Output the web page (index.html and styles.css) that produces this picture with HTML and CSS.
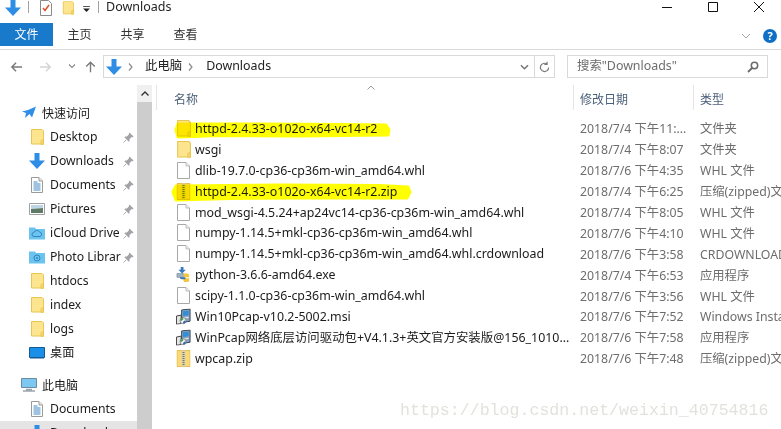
FILE: index.html
```html
<!DOCTYPE html>
<html lang="zh">
<head>
<meta charset="utf-8">
<title>Downloads</title>
<link rel="stylesheet" href="styles.css">
</head>
<body>
<svg class="defs" width="0" height="0" aria-hidden="true">
  <defs>
    <symbol id="i-folder" viewBox="0 0 14 16">
      <path d="M1.5.5h10.500l1.500 1.500v13h-12z" fill="#fde58f" stroke="#e8c64f"/>
      <path d="M11 15.500v-4l2.500-1v5z" fill="#f6d36a" stroke="#e8c64f" stroke-width=".7"/>
    </symbol>
    <symbol id="i-down" viewBox="0 0 16 16">
      <path d="M5.500 0h5v7.500H16L8 16 0 7.500h5.500z" fill="#2e8de4"/>
    </symbol>
    <symbol id="i-doc" viewBox="0 0 12 16">
      <path d="M.5.500h7.500l3.500 3.500v11.500H.5z" fill="#fff" stroke="#9a9a9a"/>
      <path d="M8 .5v3.500h3.500" fill="#e8e8e8" stroke="#9a9a9a"/>
      <path d="M2.500 5h4M2.500 7h7M2.500 9h7M2.500 11h7M2.500 13h7" stroke="#3d86c6"/>
    </symbol>
    <symbol id="i-file" viewBox="0 0 13 17">
      <path d="M.5.5h8.500l3.500 3.500v12.500H.5z" fill="#fff" stroke="#a8a8a8"/>
      <path d="M9 .5v3.500h3.500" fill="#f0f0f0" stroke="#bdbdbd"/>
    </symbol>
    <symbol id="i-zip" viewBox="0 0 14 17">
      <path d="M.5.500h13v16H.500z" fill="#fbd976" stroke="#e5bf52"/>
      <path d="M5 .5h4v16H5z" fill="#d9d2b4"/>
      <path d="M6 2.500h2M6 4.500h2M6 6.500h2M6 8.500h2M6 10.500h2M6 12.500h2M6 14.500h2" stroke="#77775e"/>
    </symbol>
    <symbol id="i-pin" viewBox="0 0 12 12">
      <path d="M7 .5l4.500 4.500-1 .7-1-.3L7 7.800l.2 1.900-.9.800L1.500 5.700l.8-.9 1.900.2 2.400-2.500-.3-1z" fill="#a0a4a8"/>
      <path d="M3.500 8.500L.5 11.500" stroke="#a0a4a8"/>
    </symbol>
    <symbol id="i-msi" viewBox="0 0 16 17">
      <path d="M6 1.500L15 .5v13l-9 1.500z" fill="#8aa2bb" stroke="#2f3f52"/>
      <path d="M7.500 3l6-.8v5l-6 .8z" fill="#2f8fd8"/>
      <path d="M7.500 9.500l6-.8v1.500l-6 .8z" fill="#dfe6ee"/>
      <path d="M.5 8l5-1v9l-5 .8z" fill="#e6e6e6" stroke="#3a3a3a"/>
      <circle cx="7.500" cy="13" r="3.300" fill="#e8e8e8" stroke="#555" stroke-width=".6"/>
      <path d="M4.500 13a3 3 0 0 1 3-3v3z" fill="#3a9a4a"/>
      <path d="M7.500 13h3a3 3 0 0 1-3 3z" fill="#2f68b8"/>
      <circle cx="7.500" cy="13" r="1" fill="#fff"/>
    </symbol>
  </defs>
</svg>

<div class="app">
  <header class="titlebar">
    <div class="qat">
      <svg class="ic16" viewBox="0 0 16 16"><use href="#i-down"/></svg>
      <span class="vsep"></span>
      <svg class="ic-check" viewBox="0 0 12 16">
        <path d="M.5.500h8l3 3v12h-11z" fill="#fff" stroke="#8a8a8a"/>
        <path d="M3 8l2 2.500L9 5" fill="none" stroke="#d9532c" stroke-width="1.500"/>
      </svg>
      <svg class="ic-folder-t" viewBox="0 0 14 16"><use href="#i-folder"/></svg>
      <svg class="ic-drop" viewBox="0 0 8 7"><path d="M0 0h8v1H0zM0 3h8L4 7z" fill="#222"/></svg>
      <span class="vsep"></span>
      <span class="title-text">Downloads</span>
    </div>
    <div class="winctl">
      <svg class="wc" viewBox="0 0 12 12"><path d="M1 6.500h10" stroke="#111"/></svg>
      <svg class="wc" viewBox="0 0 12 12"><path d="M1.500 1.500h9v9h-9z" fill="none" stroke="#111"/></svg>
      <svg class="wc" viewBox="0 0 12 12"><path d="M1 1l10 10M11 1L1 11" stroke="#111"/></svg>
    </div>
  </header>

  <nav class="ribbon">
    <span class="tab tab-file">文件</span>
    <span class="tab">主页</span>
    <span class="tab">共享</span>
    <span class="tab">查看</span>
    <svg class="rb-chev" viewBox="0 0 10 6"><path d="M1 1l4 4 4-4" fill="none" stroke="#a8a8a8"/></svg>
    <span class="help">?</span>
  </nav>

  <div class="addressrow">
    <div class="navbtns">
      <svg class="nav-ic" viewBox="0 0 14 12"><path d="M13 6H2M6.500 1.500L2 6l4.500 4.500" fill="none" stroke="#7a7a7a" stroke-width="1.600"/></svg>
      <svg class="nav-ic" viewBox="0 0 14 12"><path d="M1 6h11M7.500 1.500L12 6l-4.500 4.500" fill="none" stroke="#d4d4d4" stroke-width="1.600"/></svg>
      <svg class="nav-drop" viewBox="0 0 8 5"><path d="M1 .5l3 3 3-3" fill="none" stroke="#8a8a8a" stroke-width="1.200"/></svg>
      <svg class="nav-ic" viewBox="0 0 14 14"><path d="M7 13V2M2 6.500L7 1.500l5 5" fill="none" stroke="#7a7a7a" stroke-width="1.600"/></svg>
    </div>
    <div class="addr">
      <svg class="ic16" viewBox="0 0 16 16"><use href="#i-down"/></svg>
      <svg class="crumb" viewBox="0 0 5 8"><path d="M1 .5L4 4 1 7.500" fill="none" stroke="#8a8a8a" stroke-width="1.200"/></svg>
      <span class="crumb-t">此电脑</span>
      <svg class="crumb" viewBox="0 0 5 8"><path d="M1 .5L4 4 1 7.500" fill="none" stroke="#8a8a8a" stroke-width="1.200"/></svg>
      <span class="crumb-t">Downloads</span>
      <span class="spacer"></span>
      <svg class="addr-drop" viewBox="0 0 10 6"><path d="M1 1l4 4 4-4" fill="none" stroke="#707070" stroke-width="1.400"/></svg>
      <span class="addr-sep"></span>
      <svg class="addr-refresh" viewBox="0 0 12 13"><path d="M8.500 3.200A4.500 4.500 0 1 0 10.500 7M8.800.8v3h-3" fill="none" stroke="#7a7a7a" stroke-width="1.300"/></svg>
    </div>
    <div class="search">
      <span class="search-t">搜索"Downloads"</span>
      <svg class="search-ic" viewBox="0 0 12 12"><circle cx="7.500" cy="4.500" r="3.200" fill="none" stroke="#6a6a6a" stroke-width="1.500"/><path d="M5 7l-4 4" stroke="#6a6a6a" stroke-width="1.800"/></svg>
    </div>
  </div>

  <main class="main">
    <aside class="side">
      <ul class="tree">
        <li class="node node-top">
          <svg class="nic" viewBox="0 0 16 14"><path d="M15 .5l-4 11-2.500-3.500L4 12l1-5-4-1.500 6-1.500z" fill="#2f8fe6"/></svg>
          <span class="nlabel">快速访问</span>
        </li>
        <li class="node"><svg class="fic" viewBox="0 0 14 16"><use href="#i-folder"/></svg><span class="nlabel">Desktop</span><svg class="pin" viewBox="0 0 12 12"><use href="#i-pin"/></svg></li>
        <li class="node"><svg class="fic" viewBox="0 0 16 16"><use href="#i-down"/></svg><span class="nlabel">Downloads</span><svg class="pin" viewBox="0 0 12 12"><use href="#i-pin"/></svg></li>
        <li class="node"><svg class="fic" viewBox="0 0 12 16"><use href="#i-doc"/></svg><span class="nlabel">Documents</span><svg class="pin" viewBox="0 0 12 12"><use href="#i-pin"/></svg></li>
        <li class="node">
          <svg class="fic" viewBox="0 0 16 12"><path d="M.5.500h15v11H.500z" fill="#fff" stroke="#a0a0a0"/><path d="M2 2h12v3l-12 1z" fill="#bcd6e8"/><path d="M2 6l12-1v5H2z" fill="#5f7a66"/></svg>
          <span class="nlabel">Pictures</span><svg class="pin" viewBox="0 0 12 12"><use href="#i-pin"/></svg>
        </li>
        <li class="node">
          <svg class="fic" viewBox="0 0 16 13"><path d="M0 2.500V1h6l1 1.500h9V13H0z" fill="#6cc3ef"/><path d="M5 10a2 2 0 0 1 0-4 3 3 0 0 1 5.500-.5A2.300 2.300 0 0 1 11 10z" fill="none" stroke="#2f86c0"/></svg>
          <span class="nlabel">iCloud Drive</span><svg class="pin" viewBox="0 0 12 12"><use href="#i-pin"/></svg>
        </li>
        <li class="node">
          <svg class="fic" viewBox="0 0 16 13"><path d="M0 2.500V1h6l1 1.500h9V13H0z" fill="#6cc3ef"/><circle cx="8" cy="7.500" r="3" fill="none" stroke="#2f86c0"/><circle cx="8" cy="7.500" r="1" fill="#2f86c0"/></svg>
          <span class="nlabel">Photo Library</span><svg class="pin" viewBox="0 0 12 12"><use href="#i-pin"/></svg>
        </li>
        <li class="node"><svg class="fic" viewBox="0 0 14 16"><use href="#i-folder"/></svg><span class="nlabel">htdocs</span></li>
        <li class="node"><svg class="fic" viewBox="0 0 14 16"><use href="#i-folder"/></svg><span class="nlabel">index</span></li>
        <li class="node"><svg class="fic" viewBox="0 0 14 16"><use href="#i-folder"/></svg><span class="nlabel">logs</span></li>
        <li class="node">
          <svg class="fic" viewBox="0 0 16 12"><path d="M.5.500h15v10H.500z" fill="#1a8fe8" stroke="#155a96"/><path d="M1 10.500h14v1H1z" fill="#155a96"/></svg>
          <span class="nlabel">桌面</span>
        </li>
        <li class="node node-top node-gap">
          <svg class="nic-pc" viewBox="0 0 16 14"><path d="M.5.500h15v9H.500z" fill="#7cc8f0" stroke="#6b8ba0"/><path d="M5 11.500h6M2 13h12" stroke="#9aa6b0" stroke-width="1.500"/></svg>
          <span class="nlabel">此电脑</span>
        </li>
        <li class="node"><svg class="fic" viewBox="0 0 12 16"><use href="#i-doc"/></svg><span class="nlabel">Documents</span></li>
        <li class="node node-sel"><svg class="fic" viewBox="0 0 16 16"><use href="#i-down"/></svg><span class="nlabel">Downloads</span></li>
      </ul>
    </aside>

    <div class="scroll">
      <div class="scroll-up"><svg class="scroll-arrow" viewBox="0 0 8 5"><path d="M.5 4.500L4 1l3.500 3.500" fill="none" stroke="#333" stroke-width="1.400"/></svg></div>
      <div class="scroll-thumb"></div>
    </div>

    <section class="list">
      <div class="list-head">
        <div class="hcell hcell-name">名称<svg class="sort" viewBox="0 0 8 5"><path d="M.5 4.500L4 1l3.500 3.500" fill="none" stroke="#9a9a9a"/></svg></div>
        <div class="hcell">修改日期</div>
        <div class="hcell">类型</div>
      </div>
      <div class="rows">
        <div class="row"><svg class="ric" viewBox="0 0 14 16"><use href="#i-folder"/></svg><span class="rname">httpd-2.4.33-o102o-x64-vc14-r2</span><span class="rmeta">2018/7/4 下午11:...</span><span class="rmeta">文件夹</span></div>
        <div class="row"><svg class="ric" viewBox="0 0 14 16"><use href="#i-folder"/></svg><span class="rname">wsgi</span><span class="rmeta">2018/7/4 下午8:07</span><span class="rmeta">文件夹</span></div>
        <div class="row"><svg class="ric" viewBox="0 0 13 17"><use href="#i-file"/></svg><span class="rname">dlib-19.7.0-cp36-cp36m-win_amd64.whl</span><span class="rmeta">2018/7/6 下午4:35</span><span class="rmeta">WHL 文件</span></div>
        <div class="row"><svg class="ric" viewBox="0 0 14 17"><use href="#i-zip"/></svg><span class="rname">httpd-2.4.33-o102o-x64-vc14-r2.zip</span><span class="rmeta">2018/7/4 下午6:25</span><span class="rmeta">压缩(zipped)文件夹</span></div>
        <div class="row"><svg class="ric" viewBox="0 0 13 17"><use href="#i-file"/></svg><span class="rname">mod_wsgi-4.5.24+ap24vc14-cp36-cp36m-win_amd64.whl</span><span class="rmeta">2018/7/4 下午8:05</span><span class="rmeta">WHL 文件</span></div>
        <div class="row"><svg class="ric" viewBox="0 0 13 17"><use href="#i-file"/></svg><span class="rname">numpy-1.14.5+mkl-cp36-cp36m-win_amd64.whl</span><span class="rmeta">2018/7/6 下午4:10</span><span class="rmeta">WHL 文件</span></div>
        <div class="row"><svg class="ric" viewBox="0 0 13 17"><use href="#i-file"/></svg><span class="rname">numpy-1.14.5+mkl-cp36-cp36m-win_amd64.whl.crdownload</span><span class="rmeta">2018/7/6 下午3:58</span><span class="rmeta">CRDOWNLOAD 文件</span></div>
        <div class="row">
          <svg class="ric" viewBox="0 0 16 16"><path d="M1 7h7v4H1z" fill="#9fb4c8" stroke="#6d7f90" stroke-width=".6"/><path d="M5 0h3v3h2.500L6.500 7 2.500 3H5z" fill="#3d7ac0"/><path d="M8 7h4a2 2 0 0 1 2 2v2H9v1h5v2a2 2 0 0 1-2 2H9a2 2 0 0 1-1-2z" fill="#f2c53d"/><path d="M4 11h6v2H6a2 2 0 0 1-2-2z" fill="#3b76b0"/></svg>
          <span class="rname">python-3.6.6-amd64.exe</span><span class="rmeta">2018/7/4 下午6:53</span><span class="rmeta">应用程序</span>
        </div>
        <div class="row"><svg class="ric" viewBox="0 0 13 17"><use href="#i-file"/></svg><span class="rname">scipy-1.1.0-cp36-cp36m-win_amd64.whl</span><span class="rmeta">2018/7/6 下午3:56</span><span class="rmeta">WHL 文件</span></div>
        <div class="row"><svg class="ric" viewBox="0 0 16 17"><use href="#i-msi"/></svg><span class="rname">Win10Pcap-v10.2-5002.msi</span><span class="rmeta">2018/7/6 下午7:52</span><span class="rmeta">Windows Installer</span></div>
        <div class="row"><svg class="ric" viewBox="0 0 16 17"><use href="#i-msi"/></svg><span class="rname">WinPcap网络底层访问驱动包+V4.1.3+英文官方安装版@156_1010...</span><span class="rmeta">2018/7/6 下午7:58</span><span class="rmeta">应用程序</span></div>
        <div class="row"><svg class="ric" viewBox="0 0 14 17"><use href="#i-zip"/></svg><span class="rname">wpcap.zip</span><span class="rmeta">2018/7/6 下午7:48</span><span class="rmeta">压缩(zipped)文件夹</span></div>
      </div>
    </section>
  </main>

  <svg class="marker" viewBox="0 0 781 429" aria-hidden="true">
    <path class="marker-a" d="M178 124L260 124 340 124.500 386 125 389 130 388 135 300 136 220 135.500 178 137 176 130z"/>
    <path class="marker-b" d="M176 186L280 185 380 185.500 408 187 410 192 407 198 300 198 230 198.500 176 200 173 192z"/>
  </svg>
  <div class="watermark">https://blog.csdn.net/weixin_40754816</div>
</div>
</body>
</html>
```

FILE: styles.css
```css
* { box-sizing: border-box; }
html, body { margin: 0; padding: 0; background: #fff; }
body { width: 781px; height: 429px; overflow: hidden; font-family: "Noto Sans", "Noto Sans CJK SC", sans-serif; font-size: 12px; color: #1b1b1b; }
.defs { position: absolute; }
svg { display: block; flex: none; }
ul { list-style: none; margin: 0; padding: 0; }

.app { position: relative; width: 781px; height: 429px; overflow: hidden; display: flex; flex-direction: column; }

.titlebar { height: 23px; display: flex; justify-content: space-between; }
.qat { display: flex; align-items: flex-start; padding-left: 5px; }
.ic16 { width: 16px; height: 16px; }
.vsep { width: 1px; height: 12px; background: #a0a0a0; margin: 1px 11px 0 7px; }
.ic-check { width: 12px; height: 16px; margin: 0 10px 0 0; }
.ic-folder-t { width: 12px; height: 16px; margin-right: 9px; }
.ic-drop { width: 7px; height: 6px; margin: 6px 1px 0 0; }
.title-text { margin-top: -1px; line-height: 16px; margin-left: -4px; font-size: 12.500px; color: #222; }
.winctl { display: flex; gap: 34px; padding: 1px 16px 0 0; }
.wc { width: 12px; height: 12px; }

.ribbon { height: 27px; display: flex; align-items: flex-start; border-bottom: 1px solid #dadada; position: relative; }
.tab { width: 53px; height: 23px; line-height: 23px; text-align: center; font-size: 12px; color: #333; }
.tab-file { background: #1979ca; color: #fff; }
.rb-chev { width: 10px; height: 6px; margin: 10px 12px 0 auto; }
.help { width: 14px; height: 14px; border-radius: 50%; background: #0f6fc6; color: #fff; font-size: 11px; font-weight: 700; line-height: 14px; text-align: center; margin: 6px 4px 0 0; }

.addressrow { height: 35px; display: flex; align-items: flex-start; padding: 5px 12px 0 10px; }
.navbtns { display: flex; align-items: center; height: 23px; width: 93px; }
.nav-ic { width: 13px; height: 12px; margin-right: 16px; }
.nav-drop { width: 8px; height: 5px; margin: 0 8px 0 0; }
.addr { width: 452px; height: 23px; border: 1px solid #d9d9d9; display: flex; align-items: center; padding: 0 3px 0 2px; }
.crumb { width: 5px; height: 8px; margin: 0 12px 0 6px; }
.crumb-t { font-size: 12.400px; color: #222; white-space: nowrap; line-height: 16px; margin-bottom: 2px; }
.crumb + .crumb-t + .crumb { margin-right: 13px; }
.spacer { flex: 1; }
.addr-drop { width: 9px; height: 6px; margin-right: 5px; }
.addr-sep { width: 1px; height: 21px; background: #d9d9d9; margin-right: 4px; }
.addr-refresh { width: 11px; height: 12px; margin-right: 1px; }
.search { width: 201px; height: 23px; margin-left: 12px; border: 1px solid #d9d9d9; display: flex; align-items: center; justify-content: space-between; padding: 0 8px 0 9px; }
.search-t { font-size: 12.400px; color: #6d6d6d; line-height: 16px; margin-bottom: 2px; }
.search-ic { width: 12px; height: 12px; }

.main { flex: 1; min-height: 0; display: flex; }
.side { width: 137px; padding-top: 16px; overflow: hidden; }
.node { height: 24px; display: flex; align-items: center; padding-left: 29px; font-size: 12.200px; color: #1b1b1b; position: relative; }
.fic { width: 16px; height: 16px; margin-right: 5px; }
.nic, .nic-pc { width: 16px; height: 16px; margin-right: 5px; }
.node-top { padding-left: 21px; }
.node-top .nlabel { font-size: 12px; margin-bottom: 0; }
.node-gap { margin-top: 8px; }
.node-sel { background: #e5e5e5; }
.nlabel { display: block; width: 71px; overflow: hidden; white-space: nowrap; margin-bottom: 2px; }
.pin { width: 11px; height: 11px; margin-left: 2px; }

.scroll { width: 15px; background: #f0f0f0; display: flex; flex-direction: column; }
.scroll-up { height: 17px; display: flex; align-items: center; justify-content: center; }
.scroll-arrow { width: 8px; height: 5px; }
.scroll-thumb { flex: 1; background: #cdcdcd; }

.list { flex: 1; min-width: 0; padding-left: 4px; }
.list-head { height: 25px; display: grid; grid-template-columns: 417px 120px 88px; }
.hcell { border-left: 1px solid #e5e5e5; padding: 6px 0 0 6px; font-size: 12px; color: #4c607a; line-height: 18px; position: relative; }
.hcell-name { padding-left: 17px; }
.sort { position: absolute; left: 210px; top: 0; width: 8px; height: 5px; }
.rows { padding-top: 8px; }
.row { height: 20.900px; display: grid; grid-template-columns: 15px 382px 120px 88px; align-items: center; padding-left: 20px; white-space: nowrap; }
.ric { width: 15px; height: 17px; }
.rname { padding-left: 4px; font-size: 12.400px; color: #1b1b1b; overflow: hidden; }
.rmeta { padding-left: 7px; font-size: 12.300px; color: #6d6d6d; overflow: hidden; }

.marker { position: absolute; inset: 0; width: 781px; height: 429px; mix-blend-mode: multiply; pointer-events: none; }
.marker-a, .marker-b { fill: #ffff00; stroke: #ffff00; stroke-width: 3; stroke-linejoin: round; }
.watermark { position: absolute; left: 400px; top: 401px; font-family: "Liberation Mono", monospace; font-size: 16.600px; line-height: 20px; color: #e2e2dd; white-space: nowrap; }
```
